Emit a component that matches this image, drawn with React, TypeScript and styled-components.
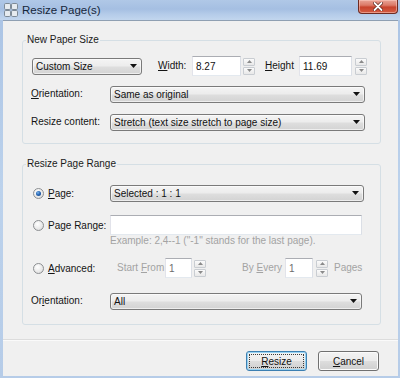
import React from 'react';
import styled, { createGlobalStyle, css } from 'styled-components';

const Global = createGlobalStyle`
  html, body { margin: 0; padding: 0; background: #b9cfe9; }
  body { font-family: "Liberation Sans", Arial, sans-serif; font-size: 10px; color: #111; }
  * { box-sizing: border-box; }
`;

const Window = styled.div`
  width: 400px;
  height: 378px;
  display: flex;
  flex-direction: column;
  background: linear-gradient(180deg, #aac3e4 0%, #bcd2ec 50%, #b6cce8 100%);
  overflow: hidden;
`;

const TitleBar = styled.div`
  height: 20px;
  flex: none;
  display: flex;
  align-items: flex-start;
  background: linear-gradient(180deg, #b0c8e7 0%, #a5bfe2 45%, #b4cbe9 70%, #c2d6ee 100%);
`;

const AppIcon = styled.svg`
  margin: 3px 0 0 4px;
  flex: none;
`;

const Title = styled.div`
  margin: 3px 0 0 4px;
  font-size: 11.5px;
  line-height: 14px;
  color: #15263a;
`;

const CloseButton = styled.div`
  margin-left: auto;
  margin-right: 2px;
  width: 40px;
  height: 14px;
  display: flex;
  align-items: center;
  justify-content: center;
  border: 1px solid #6e2b22;
  border-top: none;
  border-radius: 0 0 4px 4px;
  background: linear-gradient(180deg, #e9a497 0%, #dc7a68 40%, #c8432d 55%, #d45e45 100%);
  box-shadow: inset 0 0 0 1px rgba(255, 210, 200, 0.5);
`;

const Client = styled.div`
  flex: 1;
  margin: 0 2px 2px 3px;
  background: #f0f0f0;
  border-top: 1px solid #8f9fb2;
  display: flex;
  flex-direction: column;
`;

const Group = styled.fieldset<{ $top: number; $pt: number; $pb: number }>`
  margin: ${p => p.$top}px 17px 0 19px;
  padding: ${p => p.$pt}px 15px ${p => p.$pb}px 8px;
  border: 1px solid #d5dfe5;
  border-radius: 3px;
  min-width: 0;
  display: flex;
  flex-direction: column;
`;

const Legend = styled.legend`
  margin-left: -5px;
  padding: 0 1px;
  line-height: 12px;
  height: 12px;
  color: #1a1a1a;
`;

const Row = styled.div<{ $mt?: number }>`
  display: flex;
  align-items: center;
  height: 20px;
  margin-top: ${p => p.$mt ?? 0}px;
`;

const Label = styled.div<{ $w?: number; $ml?: number; $disabled?: boolean }>`
  flex: none;
  width: ${p => (p.$w ? `${p.$w}px` : 'auto')};
  margin-left: ${p => p.$ml ?? 0}px;
  white-space: pre;
  line-height: 20px;
  color: ${p => (p.$disabled ? '#a3a3a3' : '#141414')};
`;

const RadioOption = styled.div`
  flex: none;
  width: 79px;
  display: flex;
  align-items: center;
  white-space: pre;
  color: #141414;
`;

const Key = styled.span`
  text-decoration: underline;
  text-underline-offset: 1px;
`;

const Combo = styled.div<{ $w?: number; $ml?: number; $mr?: number }>`
  ${p => (p.$w ? css`width: ${p.$w}px; flex: none;` : css`flex: 1;`)}
  margin-left: ${p => p.$ml ?? 0}px;
  margin-right: ${p => p.$mr ?? 0}px;
  height: 17px;
  display: flex;
  align-items: center;
  justify-content: space-between;
  padding: 0 4px 0 3px;
  border: 1px solid #7a7a7a;
  border-radius: 3px;
  background: linear-gradient(180deg, #f4f4f4 0%, #ececec 48%, #dedede 52%, #d3d3d3 100%);
  box-shadow: inset 0 0 0 1px rgba(255, 255, 255, 0.6);
  color: #111;
  white-space: nowrap;
`;

const Arrow = styled.svg`
  flex: none;
`;

const TextBox = styled.div<{ $w?: number; $ml?: number; $mr?: number; $disabled?: boolean }>`
  ${p => (p.$w ? css`width: ${p.$w}px; flex: none;` : css`flex: 1;`)}
  margin-left: ${p => p.$ml ?? 0}px;
  margin-right: ${p => p.$mr ?? 0}px;
  height: 20px;
  display: flex;
  align-items: center;
  padding-left: 3px;
  background: #fff;
  border: 1px solid;
  border-color: #abadb3 #dbdfe6 #e3e9ef #e2e3ea;
  color: ${p => (p.$disabled ? '#6d6d6d' : '#111')};
`;

const Spin = styled.div<{ $ml?: number }>`
  flex: none;
  margin-left: ${p => p.$ml ?? 2}px;
  width: 12px;
  height: 17px;
  display: flex;
  flex-direction: column;
  gap: 1px;
`;

const SpinPart = styled.div`
  flex: 1;
  display: flex;
  align-items: center;
  justify-content: center;
  border: 1px solid #c9cdd2;
  border-radius: 1px;
  background: linear-gradient(180deg, #fbfbfb, #e8e8e8);
`;

const RadioDot = styled.span<{ $on?: boolean }>`
  flex: none;
  width: 11px;
  height: 11px;
  margin: 0 4px 0 2px;
  border-radius: 50%;
  border: 1px solid #8c8f92;
  background: radial-gradient(circle at 40% 35%, #ffffff 0%, #e8e8e8 60%, #cfcfcf 100%);
  display: flex;
  align-items: center;
  justify-content: center;
  &::after {
    content: '';
    display: ${p => (p.$on ? 'block' : 'none')};
    width: 5px;
    height: 5px;
    border-radius: 50%;
    background: radial-gradient(circle at 40% 35%, #7fb6ea 0%, #2767b6 45%, #0f3a7a 100%);
  }
`;

const Hint = styled.div`
  margin-left: 79px;
  height: 12px;
  line-height: 12px;
  color: #a3a3a3;
  white-space: nowrap;
`;

const Separator = styled.div`
  margin-top: 14px;
  height: 1px;
  background: #dcdcdc;
  box-shadow: 0 1px 0 #fafafa;
`;

const ButtonBar = styled.div`
  margin-top: 11px;
  display: flex;
  justify-content: flex-end;
  gap: 11px;
  padding-right: 19px;
`;

const Button = styled.div<{ $default?: boolean }>`
  width: 61px;
  height: 20px;
  display: flex;
  align-items: center;
  justify-content: center;
  border-radius: 3px;
  border: 1px solid ${p => (p.$default ? '#3c7fb1' : '#707070')};
  background: linear-gradient(180deg, #f3f3f3 0%, #ebebeb 48%, #dddddd 52%, #cfcfcf 100%);
  box-shadow: inset 0 0 0 1px ${p => (p.$default ? '#97d3f3' : '#fbfbfb')};
  color: #111;
  white-space: pre;
`;

const FocusRing = styled.span`
  display: flex;
  align-items: center;
  justify-content: center;
  width: 55px;
  height: 14px;
  border: 1px dotted #3a3a3a;
`;

const DownArrow = () => (
  <Arrow width="7" height="4" viewBox="0 0 7 4">
    <path d="M0 0H7L3.5 4Z" fill="#111" />
  </Arrow>
);

const Spinner = ({ ml }: { ml?: number }) => (
  <Spin $ml={ml}>
    <SpinPart>
      <svg width="5" height="3" viewBox="0 0 5 3"><path d="M0 3H5L2.5 0Z" fill="#8a8a8a" /></svg>
    </SpinPart>
    <SpinPart>
      <svg width="5" height="3" viewBox="0 0 5 3"><path d="M0 0H5L2.5 3Z" fill="#8a8a8a" /></svg>
    </SpinPart>
  </Spin>
);

export default function App() {
  return (
    <>
      <Global />
      <Window>
        <TitleBar>
          <AppIcon width="14" height="14" viewBox="0 0 14 14">
            {[[0, 0], [7, 0], [0, 7], [7, 7]].map(([x, y]) => (
              <rect key={`${x}-${y}`} x={x + 0.5} y={y + 0.5} width="6" height="6" rx="1.2" fill="#e6ebf0" stroke="#7d8a96" />
            ))}
          </AppIcon>
          <Title>Resize Page(s)</Title>
          <CloseButton>
            <svg width="10" height="9" viewBox="0 0 10 9">
              <path d="M1.5 1L8.5 8M8.5 1L1.5 8" stroke="#5a1e16" strokeWidth="3.2" strokeLinecap="round" />
              <path d="M1.5 1L8.5 8M8.5 1L1.5 8" stroke="#ffffff" strokeWidth="1.8" strokeLinecap="round" />
            </svg>
          </CloseButton>
        </TitleBar>
        <Client>
          <Group $top={13} $pt={10} $pb={11}>
            <Legend>New Paper Size</Legend>
            <Row>
              <Combo $w={110} $ml={1}>Custom Size<DownArrow /></Combo>
              <Label $w={34} $ml={16}><Key>W</Key>idth:</Label>
              <TextBox $w={49}>8.27</TextBox>
              <Spinner ml={2} />
              <Label $w={34} $ml={10}><Key>H</Key>eight</Label>
              <TextBox $w={53}>11.69</TextBox>
              <Spinner ml={3} />
            </Row>
            <Row $mt={8}>
              <Label $w={79}><Key>O</Key>rientation:</Label>
              <Combo>Same as original<DownArrow /></Combo>
            </Row>
            <Row $mt={8}>
              <Label $w={79}>Resize content:</Label>
              <Combo>Stretch (text size stretch to page size)<DownArrow /></Combo>
            </Row>
          </Group>
          <Group $top={14} $pt={13} $pb={13}>
            <Legend>Resize Page Range</Legend>
            <Row>
              <RadioOption><RadioDot $on /><span><Key>P</Key>age:</span></RadioOption>
              <Combo $mr={1}>Selected : 1 : 1<DownArrow /></Combo>
            </Row>
            <Row $mt={12}>
              <RadioOption><RadioDot /><span>Pa<Key>g</Key>e Range:</span></RadioOption>
              <TextBox $mr={3} />
            </Row>
            <Hint>Example: 2,4--1 ("-1" stands for the last page).</Hint>
            <Row $mt={11}>
              <RadioOption><RadioDot /><span><Key>A</Key>dvanced:</span></RadioOption>
              <Label $w={48} $ml={7} $disabled>Start <Key>F</Key>rom</Label>
              <TextBox $w={27} $disabled>1</TextBox>
              <Spinner ml={2} />
              <Label $w={43} $ml={36} $disabled>By <Key>E</Key>very</Label>
              <TextBox $w={28} $disabled>1</TextBox>
              <Spinner ml={3} />
              <Label $ml={6} $disabled>Pages</Label>
            </Row>
            <Row $mt={13}>
              <Label $w={79}>Or<Key>i</Key>entation:</Label>
              <Combo $mr={3}>All<DownArrow /></Combo>
            </Row>
          </Group>
          <Separator />
          <ButtonBar>
            <Button $default><FocusRing><Key>R</Key>esize</FocusRing></Button>
            <Button><Key>C</Key>ancel</Button>
          </ButtonBar>
        </Client>
      </Window>
    </>
  );
}
